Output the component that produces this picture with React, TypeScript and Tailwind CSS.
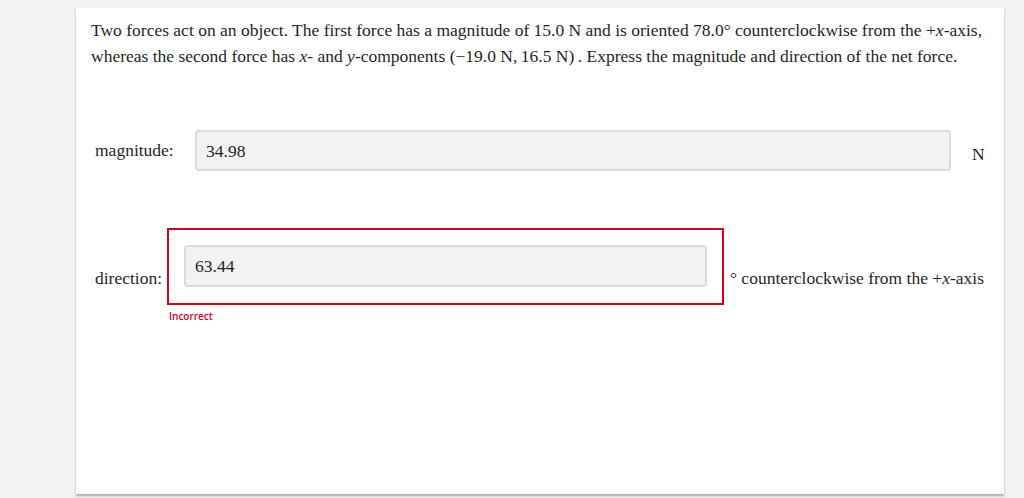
export default function App() {
  return (
    <div className="min-h-screen bg-[#f2f2f2] pt-2 pl-[76px] font-['Liberation_Serif','Times_New_Roman',serif] text-[#1f1f1f]">
      <div className="w-[928px] h-[486px] bg-white shadow-[0_2px_2px_rgba(0,0,0,0.3)] px-[15px] pt-[9px]">
        <p className="text-[17.5px] leading-[26px]">
          Two forces act on an object. The first force has a magnitude of 15.0 N and is oriented 78.0° counterclockwise from the +<i>x</i>-axis,
          whereas the second force has <i>x</i>- and <i>y</i>-components (−19.0 N,&thinsp;16.5 N)&thinsp;. Express the magnitude and direction of the net force.
        </p>

        <div className="mt-[61px] flex items-center pl-[4px] text-[17.5px]">
          <span className="w-[100px]">magnitude:</span>
          <div className="w-[756px] h-[41px] rounded-[4px] border-2 border-[#dcdcdc] bg-[#f2f2f2] pl-[9px] pt-[6px]">
            34.98
          </div>
          <span className="ml-[21px] mt-[8px]">N</span>
        </div>

        <div className="mt-[57px] flex items-end pl-[4px] text-[17.5px]">
          <span className="w-[72px] mb-[14px]">direction:</span>
          <div className="flex flex-col">
            <div className="w-[557px] h-[77px] border-2 border-[#d0021b] px-[15px] pt-[15px]">
              <div className="h-[42px] rounded-[4px] border-2 border-[#dcdcdc] bg-[#f2f2f2] pl-[9px] pt-[6px]">
                63.44
              </div>
            </div>
          </div>
          <span className="ml-[6px] mb-[14px]">° counterclockwise from the +<i>x</i>-axis</span>
        </div>
        <div className="pl-[78px] mt-[4px] text-[10px] font-semibold font-['Open_Sans',sans-serif] text-[#d0021b]">
          Incorrect
        </div>
      </div>
    </div>
  )
}
